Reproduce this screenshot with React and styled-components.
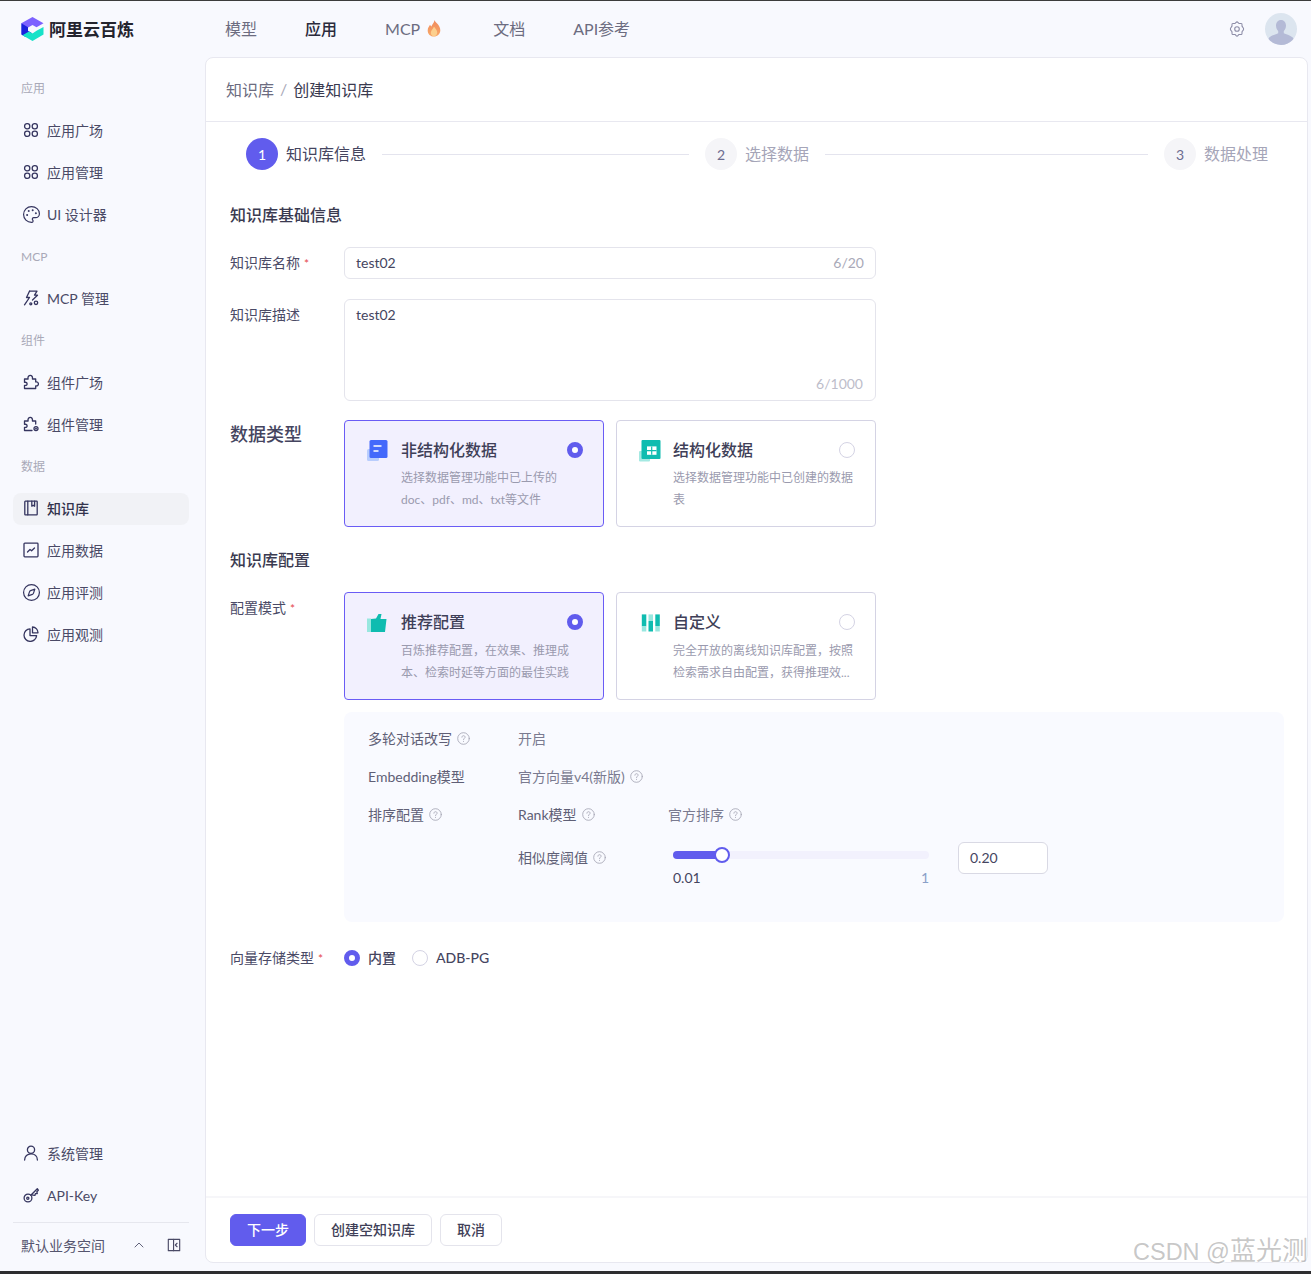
import React from 'react';
import styled, { createGlobalStyle } from 'styled-components';
import { Palette, Compass, ChevronUp } from 'lucide-react';

const FONT = '"Lato", "Noto Sans CJK SC", sans-serif';

const GlobalStyle = createGlobalStyle`
  * { box-sizing: border-box; }
  html, body { margin: 0; padding: 0; background: #f8f9fe; }
  body {
    font-family: ${FONT};
    font-size: 14px;
    color: #45455f;
  }
`;

const Page = styled.div`
  position: relative;
  height: 1274px;
  display: grid;
  grid-template-columns: 205px 1fr;
  background: #f8f9fe;
  border-top: 1px solid #3c3c3c;
  border-bottom: 3px solid #2e2e30;
  overflow: hidden;
`;

const Sidebar = styled.aside`
  display: flex;
  flex-direction: column;
  min-height: 0;
`;

const Logo = styled.div`
  display: flex;
  align-items: center;
  gap: 5px;
  height: 56px;
  padding: 0 0 2px 21px;
  font-size: 17px;
  font-weight: 700;
  color: #24242e;
  svg { margin-top: 2px; }
`;

const Nav = styled.nav`
  display: flex;
  flex-direction: column;
  gap: 10px;
  padding-top: 16px;
`;

const SectionLabel = styled.div`
  height: 32px;
  line-height: 32px;
  padding-left: 21px;
  font-size: 12px;
  color: #a9a9b8;
`;

const NavItem = styled.a`
  display: flex;
  align-items: center;
  gap: 8px;
  width: 176px;
  height: 32px;
  margin-left: 13px;
  padding: 0 0 2px 10px;
  border-radius: 8px;
  font-size: 14px;
  color: ${p => (p.$active ? '#33334d' : '#4a4a66')};
  font-weight: ${p => (p.$active ? 500 : 400)};
  background: ${p => (p.$active ? '#f1f2f6' : 'transparent')};
`;

const NavGlyph = styled.span`
  flex: none;
  display: flex;
  justify-content: center;
  width: 16px;
  color: #35355f;
  svg { flex: none; }
`;

const SidebarBottom = styled.div`
  margin-top: auto;
  display: flex;
  flex-direction: column;
  gap: 10px;
`;

const Workspace = styled.div`
  display: flex;
  align-items: center;
  width: 176px;
  height: 49px;
  margin-left: 13px;
  padding: 0 0 4px 8px;
  border-top: 1px solid #e6e7ee;
  color: #55556e;
  svg { flex: none; color: #4a4a66; }
`;

const WorkspaceName = styled.span`
  width: 110px;
`;

const CollapseButton = styled.span`
  display: flex;
  margin-left: 20px;
`;

const Right = styled.div`
  display: flex;
  flex-direction: column;
  min-width: 0;
  padding: 0 3px 8px 0;
`;

const Header = styled.header`
  flex: none;
  display: flex;
  align-items: center;
  height: 56px;
  padding: 0 11px 0 20px;
`;

const TopLink = styled.a`
  display: flex;
  align-items: center;
  gap: 7px;
  margin-right: 48px;
  padding-bottom: 2px;
  font-size: 16px;
  font-weight: ${p => (p.$active ? 500 : 400)};
  color: ${p => (p.$active ? '#2b2b3c' : '#6c6c80')};
  svg { margin-right: 4px; }
`;

const HeaderTools = styled.div`
  margin-left: auto;
  display: flex;
  align-items: center;
  gap: 20px;
`;

const Avatar = styled.div`
  width: 32px;
  height: 32px;
  border-radius: 50%;
  overflow: hidden;
  background: #dce5ef;
`;

const Panel = styled.main`
  flex: 1;
  min-height: 0;
  display: flex;
  flex-direction: column;
  background: #fff;
  border: 1px solid #e8e8f0;
  border-radius: 8px;
`;

const Breadcrumb = styled.div`
  flex: none;
  display: flex;
  align-items: center;
  gap: 6px;
  height: 64px;
  padding: 0 0 2px 20px;
  border-bottom: 1px solid #e8e8f0;
  font-size: 16px;
  color: #6c6c80;
`;

const CrumbSeparator = styled.span`
  color: #a9a9b8;
`;

const CrumbCurrent = styled.span`
  color: #3a3a50;
`;

const Content = styled.div`
  flex: 1;
  min-height: 0;
  padding: 16px 24px 0;
`;

const Stepper = styled.div`
  display: flex;
  align-items: center;
  height: 32px;
  padding: 0 15px 0 16px;
`;

const StepCircle = styled.span`
  flex: none;
  display: flex;
  align-items: center;
  justify-content: center;
  width: 32px;
  height: 32px;
  margin-right: 8px;
  border-radius: 50%;
  font-size: 14px;
  background: ${p => (p.$active ? '#615ced' : '#f5f5f8')};
  color: ${p => (p.$active ? '#fff' : '#6c6c90')};
`;

const StepLabel = styled.span`
  flex: none;
  padding-bottom: 2px;
  font-size: 16px;
  color: ${p => (p.$active ? '#45455f' : '#a5a5b8')};
`;

const StepLine = styled.span`
  flex: ${p => p.$length} 1 0;
  height: 1px;
  margin: 0 16px;
  background: #e4e4ee;
`;

const SectionTitle = styled.h3`
  margin: ${p => p.$top}px 0 0;
  height: 24px;
  line-height: 24px;
  font-size: 16px;
  font-weight: 500;
  color: #3a3a50;
`;

const FormRow = styled.div`
  display: flex;
  margin-top: ${p => p.$top}px;
`;

const FieldLabel = styled.label`
  flex: none;
  width: 114px;
  height: 32px;
  line-height: 32px;
  font-size: 14px;
  color: #4a4a66;
`;

const BigLabel = styled(FieldLabel)`
  font-size: 18px;
  font-weight: 500;
  line-height: 28px;
  color: #45455f;
`;

const Required = styled.span`
  margin-left: 4px;
  font-size: 12px;
  color: #e5484d;
`;

const Field = styled.div`
  position: relative;
  display: flex;
  justify-content: space-between;
  width: 532px;
  height: ${p => p.$height}px;
  padding: 0 11px;
  line-height: 30px;
  border: 1px solid #e4e4ec;
  border-radius: 6px;
  color: #45455f;
`;

const Count = styled.span`
  font-size: 14px;
  color: #a9a9b8;
`;

const AreaCount = styled(Count)`
  position: absolute;
  right: 12px;
  bottom: 1px;
  color: #bdbdca;
`;

const Cards = styled.div`
  display: flex;
  gap: 12px;
`;

const Card = styled.div`
  display: grid;
  grid-template-columns: 34px 1fr;
  align-content: start;
  width: 260px;
  height: ${p => p.$height}px;
  padding: 14px 20px 0 22px;
  border: 1px solid ${p => (p.$selected ? '#6a5cf5' : '#d4d3e4')};
  border-radius: 4px;
  background: ${p => (p.$selected ? '#f2f0fe' : '#fff')};
`;

const CardIcon = styled.div`
  display: flex;
  align-items: flex-start;
  padding-top: 1px;
`;

const CardBody = styled.div`
  min-width: 0;
`;

const CardHead = styled.div`
  display: flex;
  align-items: center;
  justify-content: space-between;
  height: 28px;
  font-size: 16px;
  font-weight: 500;
  color: #3f3f58;
`;

const CardDesc = styled.p`
  width: 180px;
  margin: ${p => p.$top}px 0 0;
  font-size: 12px;
  line-height: 22px;
  color: #9a9aae;
`;

const Radio = styled.span`
  flex: none;
  display: inline-block;
  width: 16px;
  height: 16px;
  margin-top: 2px;
  border-radius: 50%;
  background: #fff;
  border: ${p => (p.$on ? '5px solid #615ced' : '1px solid #d4d3e4')};
`;

const ConfigPanel = styled.div`
  width: 940px;
  height: 210px;
  margin: 12px 0 0 114px;
  padding: 7px 24px 0;
  background: #f9faff;
  border-radius: 8px;
  font-size: 14px;
  color: #5f5f76;
`;

const ConfigRow = styled.div`
  display: grid;
  grid-template-columns: 150px 150px 1fr;
  align-items: center;
  height: 38px;
`;

const SliderRow = styled.div`
  display: grid;
  grid-template-columns: 150px 155px 256px 1fr;
  align-items: start;
  margin-top: 9px;
`;

const Hint = styled.span`
  display: inline-flex;
  align-items: center;
  gap: 5px;
  color: ${p => (p.$muted ? '#7a7a90' : '#5f5f76')};
  svg { color: #a9a9b8; }
`;

const SliderHint = styled(Hint)`
  margin-top: 5px;
`;

const SliderBlock = styled.div`
  padding-top: 9px;
`;

const SliderTrack = styled.div`
  position: relative;
  height: 8px;
  border-radius: 4px;
  background: #f2f1fd;
`;

const SliderFill = styled.div`
  height: 100%;
  border-radius: 4px;
  background: #615ced;
`;

const SliderThumb = styled.span`
  position: absolute;
  top: -4px;
  width: 16px;
  height: 16px;
  margin-left: -8px;
  border-radius: 50%;
  background: #fff;
  border: 2px solid #615ced;
`;

const SliderMarks = styled.div`
  display: flex;
  justify-content: space-between;
  margin-top: 10px;
  font-size: 14px;
  color: #45455f;
`;

const MarkEnd = styled.span`
  color: #8aa0c8;
`;

const NumberBox = styled.div`
  width: 90px;
  height: 32px;
  margin-left: 29px;
  padding-left: 11px;
  line-height: 30px;
  background: #fff;
  border: 1px solid #d9d9e4;
  border-radius: 6px;
  color: #45455f;
`;

const RadioRow = styled.div`
  display: flex;
  align-items: center;
  height: 24px;
  margin-top: 24px;
  padding-bottom: 2px;
`;

const RadioLabel = styled.label`
  flex: none;
  width: 114px;
  color: #4a4a66;
`;

const RadioOption = styled.span`
  display: flex;
  align-items: center;
  gap: 8px;
  margin-right: 16px;
  font-weight: 500;
  color: #45455f;
`;

const Footer = styled.footer`
  flex: none;
  display: flex;
  gap: 8px;
  height: 66px;
  padding: 16px 24px 0;
  border-top: 2px solid #f6f6f9;
`;

const Button = styled.button`
  height: 32px;
  padding: 0 16px 2px;
  border-radius: 6px;
  font: 500 14px ${FONT};
  border: 1px solid ${p => (p.$primary ? '#615ced' : '#e4e4ec')};
  background: ${p => (p.$primary ? '#615ced' : '#fff')};
  color: ${p => (p.$primary ? '#fff' : '#3f3f58')};
`;

const Watermark = styled.div`
  position: absolute;
  right: 3px;
  bottom: 4px;
  font-family: "Liberation Sans", "Noto Sans CJK SC", sans-serif;
  font-size: 26px;
  line-height: 30px;
  color: rgba(120, 120, 120, 0.42);
  text-shadow: 1px 1px 1px rgba(255, 255, 255, 0.7);
`;

const WatermarkLatin = styled.span`
  font-size: 23.5px;
`;

const IconBase = ({ size = 16, children }) => (
  <svg width={size} height={size} viewBox="0 0 16 16" fill="none" stroke="currentColor" strokeWidth="1.3" strokeLinecap="round" strokeLinejoin="round">
    {children}
  </svg>
);

const AppsIcon = () => (
  <IconBase>
    <rect x="1.6" y="1.6" width="5.2" height="5.2" rx="2.4" />
    <rect x="9.2" y="1.6" width="5.2" height="5.2" rx="2.4" />
    <rect x="1.6" y="9.2" width="5.2" height="5.2" rx="2.4" />
    <rect x="9.2" y="9.2" width="5.2" height="5.2" rx="2.4" />
  </IconBase>
);

const McpIcon = () => (
  <IconBase>
    <path d="M6.5 1.2h7.500l-2.500 4h3L9.500 10" />
    <path d="M6.5 1.2 3.500 7.500h3L1.500 14.800" />
    <circle cx="13" cy="12.800" r="1.700" />
    <circle cx="7.800" cy="13.800" r="1" />
  </IconBase>
);

const PuzzleIcon = () => (
  <IconBase>
    <path d="M1.500 5h3.600c-.6-2.500 1-3.600 2.200-3.600S9.900 2.500 9.400 5h3.300v2.900c1.900-.4 2.700 1 2.700 2s-.8 2.400-2.700 2v2.600H1.500v-3.200c1.800.5 2.600-.5 2.600-1.400S3.300 7.900 1.500 8.400Z" />
  </IconBase>
);

const PuzzleGearIcon = () => (
  <IconBase>
    <path d="M9 14.500H1.500v-3.200c1.800.5 2.600-.5 2.600-1.400S3.300 7.900 1.500 8.400V5h3.600c-.6-2.500 1-3.600 2.200-3.600S9.900 2.500 9.400 5h3.300v3" />
    <circle cx="13" cy="12.600" r="2" />
    <circle cx="13" cy="12.600" r="0.400" />
  </IconBase>
);

const BookIcon = () => (
  <IconBase>
    <rect x="1.800" y="1.200" width="12.400" height="13.600" rx="0.600" />
    <path d="M4.800 1.200v13.600M8.800 1.200v5l1.400-1 1.400 1v-5" />
  </IconBase>
);

const ChartIcon = () => (
  <IconBase>
    <rect x="1" y="1.200" width="14" height="13.600" rx="0.800" />
    <path d="M4.500 10 7 7.500l1.600 1.300L11.500 6" />
  </IconBase>
);

const PieIcon = () => (
  <IconBase>
    <path d="M7 2.800a6.300 6.300 0 1 0 6.600 6.800H7Z" />
    <path d="M9.500 1c3 .2 5.400 2.700 5.500 5.800H9.500Z" />
  </IconBase>
);

const UserIcon = () => (
  <IconBase>
    <circle cx="8" cy="4.800" r="3.600" />
    <path d="M1.600 15c0-3.800 2.800-6.200 6.400-6.200s6.400 2.400 6.400 6.200" />
  </IconBase>
);

const KeyIcon = () => (
  <IconBase>
    <circle cx="5" cy="11" r="3.900" />
    <circle cx="4.800" cy="11.200" r="1.100" />
    <path d="M7.800 8.200 14.300 1.700l1 1.500-1.500 1.500 .5 1.800-1.900.2-.4 1.600-2.300-.2" />
  </IconBase>
);

const GearIcon = () => (
  <svg width="16" height="16" viewBox="0 0 16 16" fill="none" stroke="#8e8ea8" strokeWidth="1.100" strokeLinejoin="round">
    <path d="M8 .9c.9 0 1.200 1.200 2 1.500.9.300 2-.3 2.700.3.600.6.100 1.700.400 2.600.3.800 1.500 1.200 1.500 2.700s-1.200 1.900-1.500 2.700c-.3.900.2 2-.4 2.600-.7.600-1.800 0-2.700.3-.8.300-1.100 1.500-2 1.500s-1.200-1.200-2-1.500c-.9-.3-2 .3-2.700-.3-.6-.6-.1-1.700-.4-2.600C2.600 9.900 1.400 9.500 1.400 8s1.200-1.900 1.500-2.700c.3-.9-.2-2 .4-2.600.7-.6 1.800 0 2.700-.3C6.800 2.100 7.100.9 8 .9Z" />
    <circle cx="8" cy="8" r="2.300" />
  </svg>
);

const HelpIcon = () => (
  <svg width="13" height="13" viewBox="0 0 13 13" fill="none" stroke="currentColor" strokeWidth="0.900" strokeLinecap="round">
    <circle cx="6.500" cy="6.500" r="5.800" />
    <path d="M4.900 5.200c0-.9.700-1.500 1.600-1.500s1.600.6 1.600 1.400c0 1.200-1.600 1.200-1.600 2.500" />
    <path d="M6.500 9.300v.2" />
  </svg>
);

const FlameIcon = () => (
  <svg width="14" height="17" viewBox="0 0 14 17">
    <defs>
      <linearGradient id="flame" x1="0" y1="0" x2="0" y2="1">
        <stop offset="0" stopColor="#f08a5c" />
        <stop offset="1" stopColor="#f8a868" />
      </linearGradient>
    </defs>
    <path fill="url(#flame)" d="M7.500 0c.6 2.600 5.800 5 5.800 10.200 0 3.700-2.700 6.300-6.300 6.300S.7 14 .7 10.400c0-2.700 1.500-4 2.300-5.600.5.800.8 1.400 1.400 1.800C5 4.600 7.300 2.800 7.500 0Z" />
    <path fill="#fcd08e" d="M7 6.500c.4 1.400 3.200 3 3.200 6 0 2.200-1.500 3.800-3.200 3.800s-3.200-1.500-3.200-3.600c0-2.600 2.700-4 3.200-6.200Z" />
  </svg>
);

const LogoMark = () => (
  <svg width="23" height="24" viewBox="0 0 23 24">
    <path fill="#7d62ff" d="M11.500 0 22.500 6.200 15.500 10.300 11.500 8 4.500 12 .3 6.300Z" />
    <path fill="#1a22dc" d="M.3 6.300 7 10.200v3.600l4.500 2.600L4.500 20 .3 17.600Z" />
    <path fill="#17e2c8" d="M15.500 13.800 22.500 10v7.600L11.500 24 1.500 18.300 8 14.600l3.500 2Z" />
  </svg>
);

const ProfileFigure = () => (
  <svg width="32" height="32" viewBox="0 0 32 32">
    <path fill="#b4bad6" d="M16 7c3.200 0 5 2.500 5 5.500 0 2.400-1 4.300-2.200 5.500v2.200c2 1.100 6 1.800 9 4.200L32 32H0l4.200-7.600c3-2.400 7-3.100 9-4.200V18c-1.200-1.200-2.200-3.100-2.200-5.500C11 9.500 12.800 7 16 7Z" />
  </svg>
);

const DocIcon = () => (
  <svg width="22" height="26" viewBox="0 0 22 26">
    <rect x="0" y="13" width="12" height="12" rx="1.500" fill="#b9cdfd" />
    <rect x="2.500" y="4" width="18" height="18" rx="1.500" fill="#4469fb" />
    <path d="M6.500 10h8M6.500 15h5" stroke="#fff" strokeWidth="1.400" />
  </svg>
);

const TableIcon = () => (
  <svg width="22" height="26" viewBox="0 0 22 26">
    <rect x="0" y="15" width="11" height="10.500" rx="1" fill="#a4e9e2" />
    <rect x="2.500" y="4" width="19" height="19" rx="1" fill="#0fbcb0" />
    <rect x="8" y="10.400" width="9.500" height="8.400" fill="#fff" />
    <path d="M12.700 10.400v8.400M8 14.600h9.500" stroke="#0fbcb0" strokeWidth="1.200" />
  </svg>
);

const ThumbIcon = () => (
  <svg width="22" height="26" viewBox="0 0 22 26">
    <rect x="0" y="10.500" width="4" height="13.500" fill="#98e7df" />
    <path fill="#0fbcb0" d="M4 11 9 10.500 11.500 6h3L13.500 11h6L18 24H4Z" />
  </svg>
);

const BarsIcon = () => (
  <svg width="22" height="26" viewBox="0 0 22 26">
    <rect x="2.800" y="6.400" width="4.500" height="12" fill="#0fbcb0" />
    <rect x="2.800" y="18.400" width="4.500" height="5.100" fill="#98e7df" />
    <rect x="9.500" y="6.400" width="4.500" height="6.600" fill="#98e7df" />
    <rect x="9.500" y="13" width="4.500" height="10.500" fill="#0fbcb0" />
    <rect x="16.300" y="6.400" width="4.500" height="11.600" fill="#0fbcb0" />
    <rect x="16.300" y="18" width="4.500" height="5.500" fill="#98e7df" />
  </svg>
);

const PanelToggleIcon = () => (
  <IconBase size={14}>
    <rect x="1.500" y="1.500" width="13" height="13" />
    <path d="M7.500 1.500v13M11.500 6 9.500 8l2 2" />
  </IconBase>
);

const lucideProps = { size: 19, strokeWidth: 1.5 };

const navGroups = [
  {
    label: '应用',
    items: [
      { text: '应用广场', icon: <AppsIcon /> },
      { text: '应用管理', icon: <AppsIcon /> },
      { text: 'UI 设计器', icon: <Palette {...lucideProps} /> },
    ],
  },
  { label: 'MCP', items: [{ text: 'MCP 管理', icon: <McpIcon /> }] },
  {
    label: '组件',
    items: [
      { text: '组件广场', icon: <PuzzleIcon /> },
      { text: '组件管理', icon: <PuzzleGearIcon /> },
    ],
  },
  {
    label: '数据',
    items: [
      { text: '知识库', icon: <BookIcon />, active: true },
      { text: '应用数据', icon: <ChartIcon /> },
      { text: '应用评测', icon: <Compass {...lucideProps} /> },
      { text: '应用观测', icon: <PieIcon /> },
    ],
  },
];

function OptionCard({ icon, title, desc, selected, height, descTop }) {
  return (
    <Card $selected={selected} $height={height}>
      <CardIcon>{icon}</CardIcon>
      <CardBody>
        <CardHead>
          {title}
          <Radio $on={selected} />
        </CardHead>
        <CardDesc $top={descTop}>{desc}</CardDesc>
      </CardBody>
    </Card>
  );
}

export default function App() {
  return (
    <>
      <GlobalStyle />
      <Page>
        <Sidebar>
          <Logo>
            <LogoMark />
            阿里云百炼
          </Logo>
          <Nav>
            {navGroups.map(group => (
              <React.Fragment key={group.label}>
                <SectionLabel>{group.label}</SectionLabel>
                {group.items.map(item => (
                  <NavItem key={item.text} $active={item.active}>
                    <NavGlyph>{item.icon}</NavGlyph>
                    {item.text}
                  </NavItem>
                ))}
              </React.Fragment>
            ))}
          </Nav>
          <SidebarBottom>
            <NavItem>
              <NavGlyph>
                <UserIcon />
              </NavGlyph>
              系统管理
            </NavItem>
            <NavItem>
              <NavGlyph>
                <KeyIcon />
              </NavGlyph>
              API-Key
            </NavItem>
            <Workspace>
              <WorkspaceName>默认业务空间</WorkspaceName>
              <ChevronUp size={16} strokeWidth={1.3} />
              <CollapseButton>
                <PanelToggleIcon />
              </CollapseButton>
            </Workspace>
          </SidebarBottom>
        </Sidebar>

        <Right>
          <Header>
            <TopLink>模型</TopLink>
            <TopLink $active>应用</TopLink>
            <TopLink>
              MCP
              <FlameIcon />
            </TopLink>
            <TopLink>文档</TopLink>
            <TopLink>API参考</TopLink>
            <HeaderTools>
              <GearIcon />
              <Avatar>
                <ProfileFigure />
              </Avatar>
            </HeaderTools>
          </Header>

          <Panel>
            <Breadcrumb>
              知识库
              <CrumbSeparator>/</CrumbSeparator>
              <CrumbCurrent>创建知识库</CrumbCurrent>
            </Breadcrumb>

            <Content>
              <Stepper>
                <StepCircle $active>1</StepCircle>
                <StepLabel $active>知识库信息</StepLabel>
                <StepLine $length={307} />
                <StepCircle>2</StepCircle>
                <StepLabel>选择数据</StepLabel>
                <StepLine $length={323} />
                <StepCircle>3</StepCircle>
                <StepLabel>数据处理</StepLabel>
              </Stepper>

              <SectionTitle $top={33}>知识库基础信息</SectionTitle>

              <FormRow $top={20}>
                <FieldLabel>
                  知识库名称
                  <Required>*</Required>
                </FieldLabel>
                <Field $height={32}>
                  test02
                  <Count>6/20</Count>
                </Field>
              </FormRow>

              <FormRow $top={20}>
                <FieldLabel>知识库描述</FieldLabel>
                <Field $height={102}>
                  test02
                  <AreaCount>6/1000</AreaCount>
                </Field>
              </FormRow>

              <FormRow $top={19}>
                <BigLabel>数据类型</BigLabel>
                <Cards>
                  <OptionCard
                    selected
                    height={107}
                    descTop={4}
                    icon={<DocIcon />}
                    title="非结构化数据"
                    desc="选择数据管理功能中已上传的doc、pdf、md、txt等文件"
                  />
                  <OptionCard
                    height={107}
                    descTop={4}
                    icon={<TableIcon />}
                    title="结构化数据"
                    desc="选择数据管理功能中已创建的数据表"
                  />
                </Cards>
              </FormRow>

              <SectionTitle $top={21}>知识库配置</SectionTitle>

              <FormRow $top={20}>
                <FieldLabel>
                  配置模式
                  <Required>*</Required>
                </FieldLabel>
                <Cards>
                  <OptionCard
                    selected
                    height={108}
                    descTop={5}
                    icon={<ThumbIcon />}
                    title="推荐配置"
                    desc="百炼推荐配置，在效果、推理成本、检索时延等方面的最佳实践"
                  />
                  <OptionCard
                    height={108}
                    descTop={5}
                    icon={<BarsIcon />}
                    title="自定义"
                    desc="完全开放的离线知识库配置，按照检索需求自由配置，获得推理效..."
                  />
                </Cards>
              </FormRow>

              <ConfigPanel>
                <ConfigRow>
                  <Hint>
                    多轮对话改写
                    <HelpIcon />
                  </Hint>
                  <Hint $muted>开启</Hint>
                </ConfigRow>
                <ConfigRow>
                  <Hint>Embedding模型</Hint>
                  <Hint $muted>
                    官方向量v4(新版)
                    <HelpIcon />
                  </Hint>
                </ConfigRow>
                <ConfigRow>
                  <Hint>
                    排序配置
                    <HelpIcon />
                  </Hint>
                  <Hint>
                    Rank模型
                    <HelpIcon />
                  </Hint>
                  <Hint $muted>
                    官方排序
                    <HelpIcon />
                  </Hint>
                </ConfigRow>
                <SliderRow>
                  <span />
                  <SliderHint>
                    相似度阈值
                    <HelpIcon />
                  </SliderHint>
                  <SliderBlock>
                    <SliderTrack>
                      <SliderFill style={{ width: '19%' }} />
                      <SliderThumb style={{ left: '19%' }} />
                    </SliderTrack>
                    <SliderMarks>
                      <span>0.01</span>
                      <MarkEnd>1</MarkEnd>
                    </SliderMarks>
                  </SliderBlock>
                  <NumberBox>0.20</NumberBox>
                </SliderRow>
              </ConfigPanel>

              <RadioRow>
                <RadioLabel>
                  向量存储类型
                  <Required>*</Required>
                </RadioLabel>
                <RadioOption>
                  <Radio $on />
                  内置
                </RadioOption>
                <RadioOption>
                  <Radio />
                  ADB-PG
                </RadioOption>
              </RadioRow>
            </Content>

            <Footer>
              <Button $primary>下一步</Button>
              <Button>创建空知识库</Button>
              <Button>取消</Button>
            </Footer>
          </Panel>
        </Right>
        <Watermark>
          <WatermarkLatin>CSDN @</WatermarkLatin>蓝光测
        </Watermark>
      </Page>
    </>
  );
}
